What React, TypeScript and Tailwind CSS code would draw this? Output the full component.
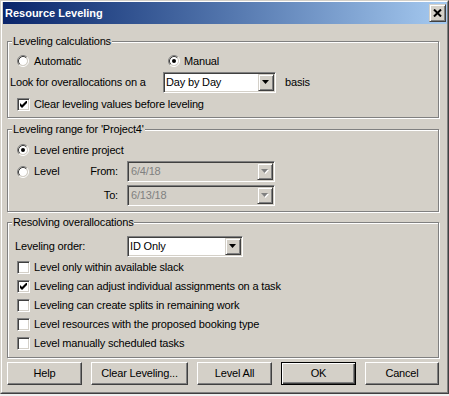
import React from "react";

const F = "font-['Liberation_Sans',Arial,sans-serif]";
const sunken =
  "border border-t-[#808080] border-l-[#808080] border-r-white border-b-white shadow-[inset_1px_1px_0_#404040,inset_-1px_-1px_0_#d4d0c8]";
const raised =
  "border border-t-[#d4d0c8] border-l-[#d4d0c8] border-r-[#404040] border-b-[#404040] shadow-[inset_1px_1px_0_#fff,inset_-1px_-1px_0_#808080]";
const frame =
  "relative border border-[#808080] shadow-[inset_1px_1px_0_#fff,1px_1px_0_#fff]";

function Radio({ checked }: { checked?: boolean }) {
  return (
    <svg width="12" height="12" viewBox="0 0 12 12" className="shrink-0">
      <circle cx="6" cy="6" r="4" fill="#fff" />
      <path d="M2.11 9.89 A5.5 5.5 0 0 1 9.89 2.11" fill="none" stroke="#808080" />
      <path d="M9.89 2.11 A5.5 5.5 0 0 1 2.11 9.89" fill="none" stroke="#fff" />
      <path d="M2.82 9.18 A4.5 4.5 0 0 1 9.18 2.82" fill="none" stroke="#404040" />
      <path d="M9.18 2.82 A4.5 4.5 0 0 1 2.82 9.18" fill="none" stroke="#d4d0c8" />
      {checked && <circle cx="6" cy="6" r="2" fill="#000" />}
    </svg>
  );
}

function Check({ checked }: { checked?: boolean }) {
  return (
    <span className={`w-[13px] h-[13px] shrink-0 bg-white flex items-center justify-center ${sunken}`}>
      {checked && (
        <svg width="7" height="7" viewBox="0 0 7 7">
          <path d="M0 2 L2 4 L7 -1 L7 2 L2 7 L0 5 Z" fill="#000" />
        </svg>
      )}
    </span>
  );
}

function Arrow({ disabled }: { disabled?: boolean }) {
  return (
    <span className={`w-[16px] h-[17px] shrink-0 m-[1px] bg-[#d4d0c8] flex items-center justify-center ${raised}`}>
      <svg width="8" height="5" viewBox="0 0 8 5">
        {disabled && <path d="M1 1H8L4.5 5Z" fill="#fff" />}
        <path d="M0 0H7L3.5 4Z" fill={disabled ? "#808080" : "#000"} />
      </svg>
    </span>
  );
}

function Field({
  text,
  width,
  disabled,
  pl,
}: {
  text: string;
  width: string;
  disabled?: boolean;
  pl: string;
}) {
  return (
    <div
      className={`h-[21px] flex items-center shrink-0 ${width} ${sunken} ${
        disabled ? "bg-[#d4d0c8] text-[#808080]" : "bg-white text-black"
      }`}
    >
      <span className={`flex-1 ${pl}`}>{text}</span>
      <Arrow disabled={disabled} />
    </div>
  );
}

function Legend({ children }: { children: React.ReactNode }) {
  return (
    <span className="absolute left-[4px] top-[-7px] bg-[#d4d0c8] px-[1px] leading-[13px]">
      {children}
    </span>
  );
}

function CheckRow({ checked, label, mt }: { checked?: boolean; label: string; mt: string }) {
  return (
    <div className={`h-[13px] flex items-center gap-[4px] pl-[9px] ${mt}`}>
      <Check checked={checked} />
      <span>{label}</span>
    </div>
  );
}

function Btn({ label, w, def }: { label: string; w: string; def?: boolean }) {
  const cls = def
    ? "border border-black shadow-[inset_1px_1px_0_#fff,inset_-1px_-1px_0_#404040,inset_-2px_-2px_0_#808080]"
    : "border border-t-white border-l-white border-r-[#404040] border-b-[#404040] shadow-[inset_-1px_-1px_0_#808080]";
  return (
    <div className={`h-[23px] shrink-0 bg-[#d4d0c8] flex items-center justify-center ${w} ${cls}`}>
      {label}
    </div>
  );
}

export default function App() {
  return (
    <div className={`w-[449px] h-[396px] bg-[#f0f0f0] ${F} text-[11px] text-black leading-[13px]`}>
      <div className="w-[449px] h-[394px] border border-t-[#d4d0c8] border-l-[#d4d0c8] border-r-[#404040] border-b-[#404040]">
        <div className="h-full border border-t-white border-l-white border-r-[#808080] border-b-[#808080] bg-[#d4d0c8] flex flex-col">
          {/* Title bar */}
          <div className="h-[22px] ml-[1px] flex items-center bg-linear-to-r from-[#0a246a] to-[#a6caf0] pl-[2px]">
            <span className="flex-1 text-white font-bold">Resource Leveling</span>
            <span className={`w-[17px] h-[18px] mr-[1px] bg-[#d4d0c8] flex items-center justify-center ${raised}`}>
              <svg width="9" height="8" viewBox="0 0 9 8">
                <path d="M1 0.5 L8 7.5 M8 0.5 L1 7.5" stroke="#000" strokeWidth="2" />
              </svg>
            </span>
          </div>

          <div className="flex flex-col tracking-[-0.17px]">
            {/* Group 1 */}
            <div className={`${frame} mt-[17px] ml-[5px] w-[432px] h-[77px] shrink-0`}>
              <Legend>Leveling calculations</Legend>
              <div className="mt-[12px] h-[14px] flex items-center pl-[9px]">
                <div className="w-[151px] flex items-center gap-[5px]">
                  <Radio />
                  <span>Automatic</span>
                </div>
                <div className="flex items-center gap-[4px]">
                  <Radio checked />
                  <span>Manual</span>
                </div>
              </div>
              <div className="mt-[4px] h-[21px] flex items-center pl-[2px]">
                <span className="w-[153px] shrink-0">Look for overallocations on a</span>
                <Field text="Day by Day" width="w-[113px]" pl="pl-[2px]" />
                <span className="ml-[9px]">basis</span>
              </div>
              <CheckRow checked label="Clear leveling values before leveling" mt="mt-[5px]" />
            </div>

            {/* Group 2 */}
            <div className={`${frame} mt-[11px] ml-[5px] w-[432px] h-[83px] shrink-0`}>
              <Legend>Leveling range for 'Project4'</Legend>
              <div className="mt-[13px] h-[14px] flex items-center gap-[5px] pl-[9px]">
                <Radio checked />
                <span>Level entire project</span>
              </div>
              <div className="mt-[4px] h-[21px] flex items-center pl-[9px]">
                <div className="w-[65px] shrink-0 flex items-center gap-[5px]">
                  <Radio />
                  <span>Level</span>
                </div>
                <span className="w-[36px] shrink-0 text-right">From:</span>
                <div className="ml-[9px]">
                  <Field text="6/4/18" width="w-[148px]" disabled pl="pl-[3px]" />
                </div>
              </div>
              <div className="mt-[3px] h-[21px] flex items-center pl-[9px]">
                <div className="w-[65px] shrink-0" />
                <span className="w-[36px] shrink-0 text-right">To:</span>
                <div className="ml-[9px]">
                  <Field text="6/13/18" width="w-[148px]" disabled pl="pl-[3px]" />
                </div>
              </div>
            </div>

            {/* Group 3 */}
            <div className={`${frame} mt-[10px] ml-[5px] w-[432px] h-[136px] shrink-0`}>
              <Legend>Resolving overallocations</Legend>
              <div className="mt-[13px] h-[21px] flex items-center pl-[7px]">
                <span className="w-[112px] shrink-0">Leveling order:</span>
                <Field text="ID Only" width="w-[116px]" pl="pl-[2px]" />
              </div>
              <CheckRow label="Level only within available slack" mt="mt-[4px]" />
              <CheckRow checked label="Leveling can adjust individual assignments on a task" mt="mt-[6px]" />
              <CheckRow label="Leveling can create splits in remaining work" mt="mt-[6px]" />
              <CheckRow label="Level resources with the proposed booking type" mt="mt-[6px]" />
              <CheckRow label="Level manually scheduled tasks" mt="mt-[6px]" />
            </div>

            {/* Buttons */}
            <div className="mt-[4px] ml-[5px] flex gap-[9px]">
              <Btn label="Help" w="w-[75px]" />
              <Btn label="Clear Leveling..." w="w-[97px]" />
              <Btn label="Level All" w="w-[75px]" />
              <Btn label="OK" w="w-[75px]" def />
              <Btn label="Cancel" w="w-[74px]" />
            </div>
          </div>
        </div>
      </div>
    </div>
  );
}
